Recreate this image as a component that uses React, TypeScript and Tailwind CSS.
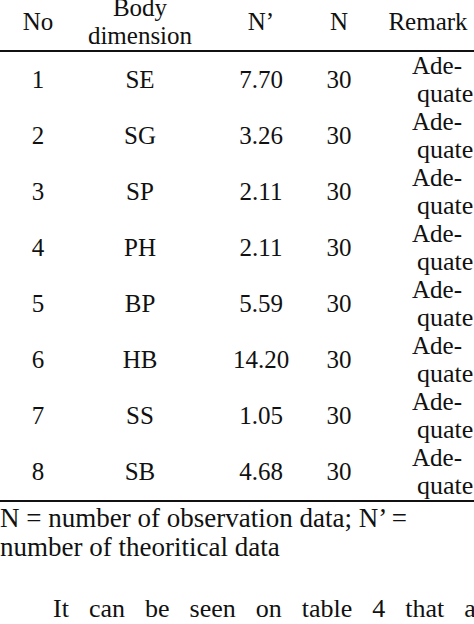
const rows = [
  ["1", "SE", "7.70"],
  ["2", "SG", "3.26"],
  ["3", "SP", "2.11"],
  ["4", "PH", "2.11"],
  ["5", "BP", "5.59"],
  ["6", "HB", "14.20"],
  ["7", "SS", "1.05"],
  ["8", "SB", "4.68"],
];

const grid = "grid grid-cols-[76px_128px_114px_42px_136px] items-center text-center";

export default function App() {
  return (
    <div
      className="h-[624px] w-[474px] overflow-hidden bg-white text-[25px] leading-[28px] text-[#111]"
      style={{ fontFamily: '"Liberation Serif", "Times New Roman", serif' }}
    >
      <div className={grid + " -mt-[6px] h-[58px] border-b-2 border-[#111]"}>
        <div>No</div>
        <div>
          Body
          <br />
          dimension
        </div>
        <div>N’</div>
        <div>N</div>
        <div>Remark</div>
      </div>

      {rows.map(([no, dim, np]) => (
        <div key={no} className={grid + " h-[56px]"}>
          <div>{no}</div>
          <div>{dim}</div>
          <div>{np}</div>
          <div>30</div>
          <div className="whitespace-nowrap text-left">
            <div className="pl-[52px]">Ade-</div>
            <div className="pl-[57px] text-[26px]">quate</div>
          </div>
        </div>
      ))}

      <div className="border-t-2 border-[#111] pt-[2px] whitespace-nowrap text-[27px] leading-[29px]">
        <div>N = number of observation data; N’ =</div>
        <div>number of theoritical data</div>
      </div>

      <div className="mt-[33px] flex gap-[20px] whitespace-nowrap pl-[53px] text-[26px]">
        <span>It</span>
        <span>can</span>
        <span>be</span>
        <span>seen</span>
        <span>on</span>
        <span>table</span>
        <span>4</span>
        <span>that</span>
        <span>a</span>
      </div>
    </div>
  );
}
